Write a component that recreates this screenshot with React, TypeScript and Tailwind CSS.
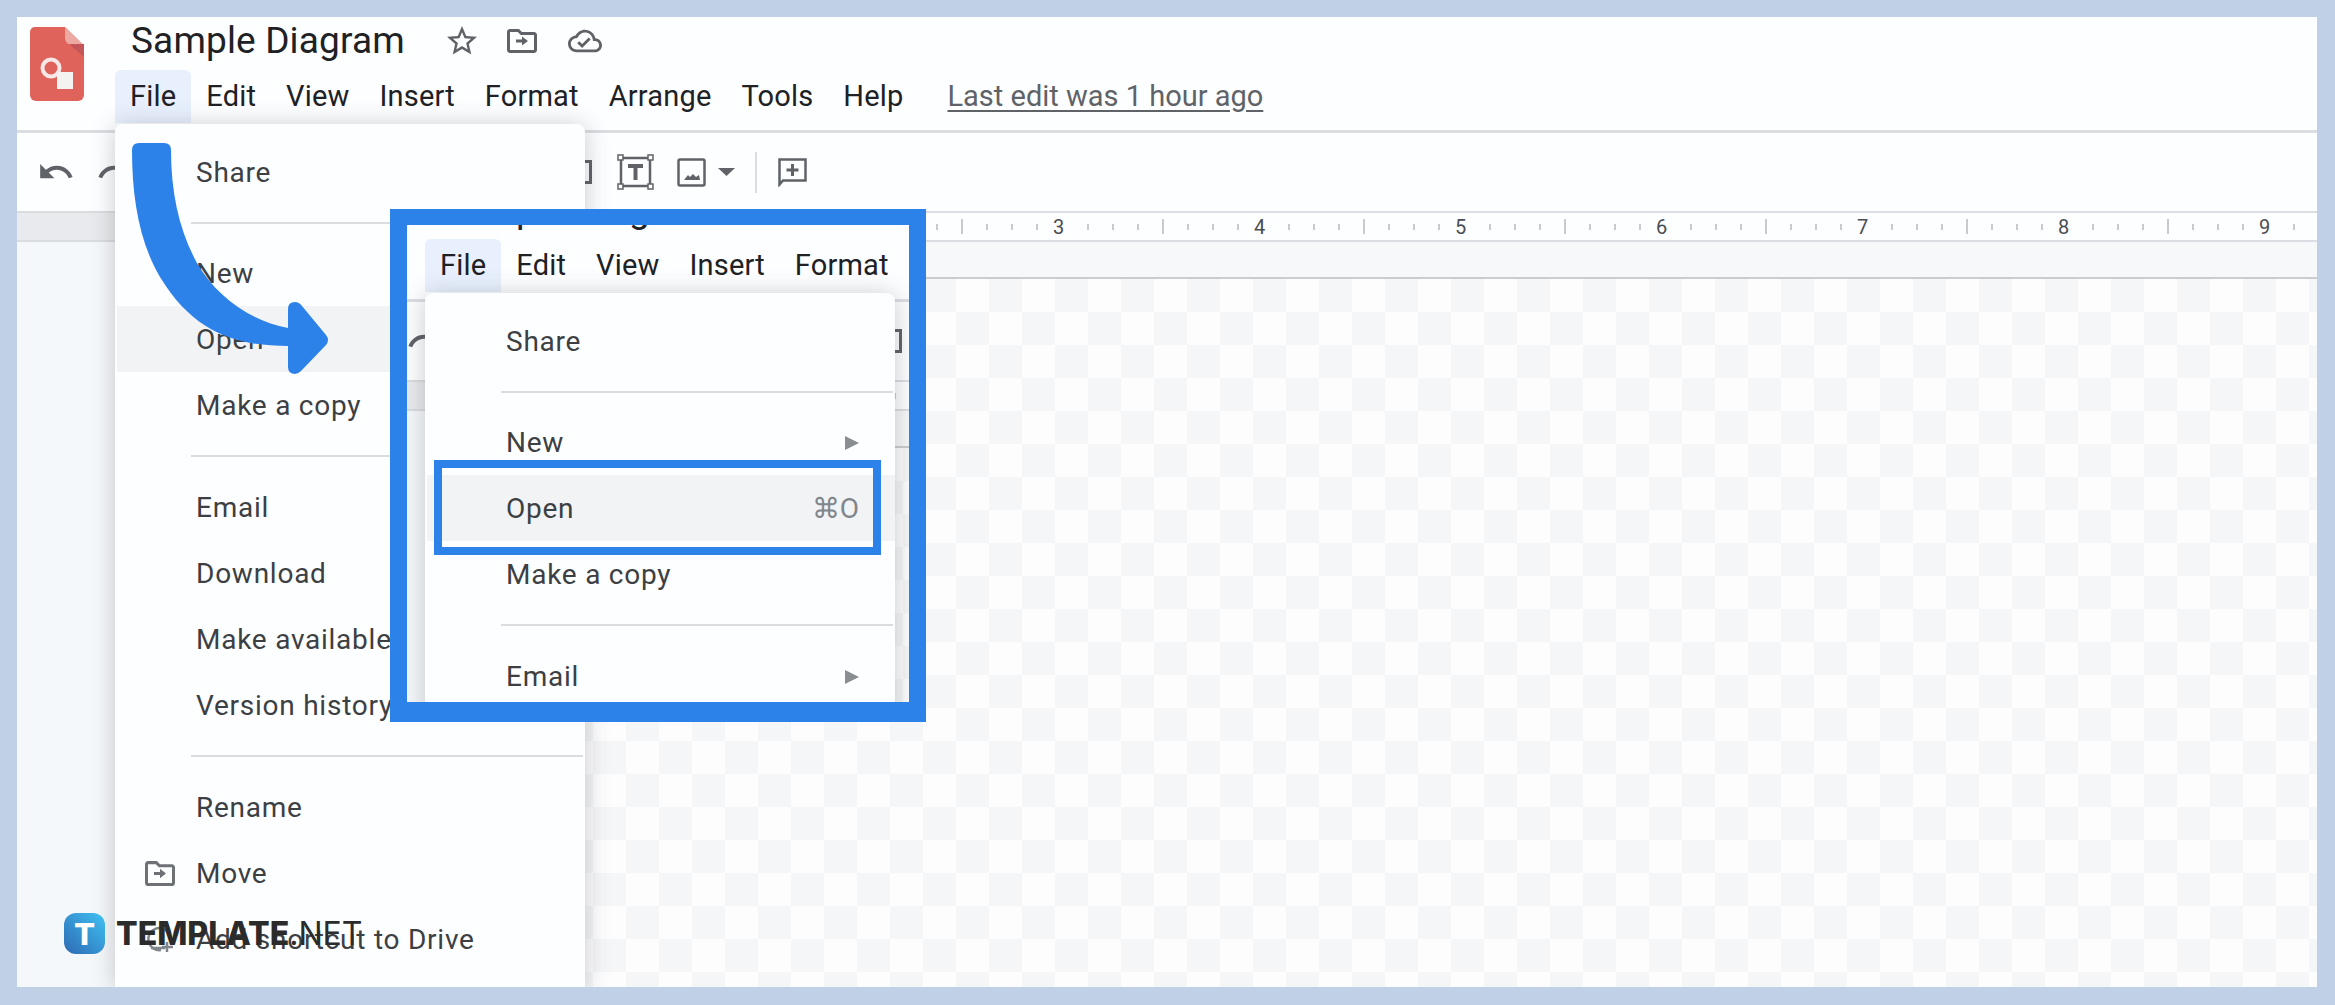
import React from 'react';

const menuBar = ['File', 'Edit', 'View', 'Insert', 'Format', 'Arrange', 'Tools', 'Help'];

const rulerGroups = [1, 2, 3, 4, 5, 6, 7, 8, 9];

const FolderMove = ({ className }: { className: string }) => (
  <svg viewBox="2 4 20 16" className={className} fill="#5f6368" preserveAspectRatio="none">
    <path d="M20 6h-8l-2-2H4c-1.1 0-2 .9-2 2v12c0 1.1.9 2 2 2h16c1.1 0 2-.9 2-2V8c0-1.1-.9-2-2-2zm0 12H4V6h5.17l2 2H20v10zm-8-5H8v-2h4V9l4 3-4 3v-2z" />
  </svg>
);

const DocIcon = () => (
  <svg viewBox="0 0 54 74" className="w-[54px] h-[74px]">
    <path d="M5 0H35L54 19V68a6 6 0 0 1-6 6H6a6 6 0 0 1-6-6V5a5 5 0 0 1 5-5z" fill="#df635b" />
    <path d="M35 0L54 18H42a7 7 0 0 1-7-7z" fill="#eea8a2" />
    <path d="M39 17H54V30z" fill="#c4565a" />
    <circle cx="21" cy="41" r="8.5" fill="none" stroke="#f6e8e7" strokeWidth="4" />
    <rect x="27" y="45" width="16" height="17" fill="#f5f2f2" />
  </svg>
);

const TextBoxIcon = () => (
  <svg viewBox="0 0 37 36" className="ml-[25px] w-[37px] h-[36px]">
    <rect x="4" y="4" width="29" height="28" fill="none" stroke="#5f6368" strokeWidth="2.5" />
    <path d="M11 10H26V14H20.5V26H16.5V14H11z" fill="#5f6368" />
    {[[3.5, 3.5], [33.5, 3.5], [3.5, 32.5], [33.5, 32.5]].map(([x, y]) => (
      <rect key={`${x}-${y}`} x={x - 2.5} y={y - 2.5} width="5" height="5" fill="#fdfeff" stroke="#5f6368" strokeWidth="1.5" />
    ))}
  </svg>
);

const Toolbar = () => (
  <div className="flex h-[78px] items-center">
    <svg viewBox="0 0 24 24" className="ml-[20px] w-[38px] h-[38px]" fill="#5f6368">
      <path d="M12.5 8c-2.65 0-5.05.99-6.9 2.6L2 7v9h9l-3.62-3.62c1.39-1.16 3.16-1.88 5.12-1.88 3.54 0 6.55 2.31 7.6 5.5l2.37-.78C21.08 11.03 17.15 8 12.5 8z" />
    </svg>
    <svg viewBox="0 0 24 24" className="ml-[21px] w-[38px] h-[38px]" fill="#5f6368">
      <path d="M18.4 10.6C16.55 8.99 14.15 8 11.5 8c-4.65 0-8.58 3.03-9.96 7.22L3.9 16c1.05-3.19 4.05-5.5 7.6-5.5 1.95 0 3.73.72 5.12 1.88L13 16h9V7l-3.6 3.6z" />
    </svg>
    <svg viewBox="0 0 8 24" className="ml-[450px] w-[8px] h-[24px]">
      <path d="M0 1.5H6.5V22.5H0" fill="none" stroke="#5f6368" strokeWidth="3" />
    </svg>
    <TextBoxIcon />
    <svg viewBox="0 0 29 29" className="ml-[23px] w-[29px] h-[29px]">
      <rect x="1.5" y="1.5" width="26" height="26" rx="1.5" fill="none" stroke="#5f6368" strokeWidth="2.5" />
      <path d="M7 22L11 17L13 19L16 16L19 19L22 17L23 22z" fill="#5f6368" />
    </svg>
    <svg viewBox="0 0 17 8" className="ml-[12px] w-[17px] h-[8px]">
      <path d="M0 0H17L8.5 8z" fill="#5f6368" />
    </svg>
    <div className="ml-[20px] w-[2px] h-[41px] bg-[#dadce0]" />
    <svg viewBox="0 0 29 29" className="ml-[21px] w-[29px] h-[29px]">
      <path d="M1.5 1.5H27.5V22.5H5L1.5 26.5z" fill="none" stroke="#5f6368" strokeWidth="2.5" />
      <path d="M13 6H16V10.5H20.5V13.5H16V18H13V13.5H8.5V10.5H13z" fill="#5f6368" />
    </svg>
  </div>
);

const Ruler = () => (
  <div className="flex h-[27px] overflow-hidden bg-[#fdfeff] pl-[32px]">
    {rulerGroups.map((n) => (
      <div key={n} className="grid w-[201px] shrink-0 grid-cols-8 items-center">
        <div className="w-[2px] h-[15px] bg-[#c8cacd]" />
        <div className="w-[2px] h-[6px] bg-[#c8cacd]" />
        <div className="w-[2px] h-[6px] bg-[#c8cacd]" />
        <div className="w-[2px] h-[6px] bg-[#c8cacd]" />
        <div className="flex w-0 justify-center -ml-[3px] text-[20px] leading-none text-[#4a4d52]">{n}</div>
        <div className="w-[2px] h-[6px] bg-[#c8cacd]" />
        <div className="w-[2px] h-[6px] bg-[#c8cacd]" />
        <div className="w-[2px] h-[6px] bg-[#c8cacd]" />
      </div>
    ))}
  </div>
);

const Arrow = () => <div className="ml-auto mr-[36px] w-0 h-0 border-y-[7px] border-y-transparent border-l-[14px] border-l-[#8a8d91]" />;

const Item = ({ label, children, active }: { label: string; children?: React.ReactNode; active?: boolean }) => (
  <div className={`flex h-[66px] items-center whitespace-nowrap pl-[79px] pt-[1px] text-[28px] tracking-[0.75px] text-[#3c4043] ${active ? 'bg-[#f1f3f4]' : ''}`}>
    <span>{label}</span>
    {children}
  </div>
);

const Divider = ({ first }: { first?: boolean }) => (
  <div className={`mt-[17px] ml-[74px] mr-[2px] h-[2px] bg-[#dadce0] ${first ? 'mb-[16px]' : 'mb-[17px]'}`} />
);

const FileMenu = () => (
  <div className="absolute left-[98px] top-[107px] h-[863px] w-[470px] rounded-t-[8px] bg-[#fdfeff] pt-[15px] pl-[2px] shadow-[0_2px_24px_rgba(60,64,67,0.28)]">
    <Item label="Share" />
    <Divider first />
    <Item label="New">
      <Arrow />
    </Item>
    <Item label="Open" active>
      <span className="ml-auto mr-[36px] text-[28px] tracking-normal text-[#80868b]">⌘O</span>
    </Item>
    <Item label="Make a copy" />
    <Divider />
    <Item label="Email">
      <Arrow />
    </Item>
    <Item label="Download" />
    <Item label="Make available offline" />
    <Item label="Version history" />
    <Divider />
    <Item label="Rename" />
    <div className="relative">
      <Item label="Move" />
      <FolderMove className="absolute left-[28px] top-[21px] w-[30px] h-[25px] opacity-90" />
    </div>
    <div className="relative">
      <Item label="Add shortcut to Drive" />
      <svg viewBox="0 0 30 30" className="absolute left-[28px] top-[18px] w-[30px] h-[30px]" fill="none" stroke="#80868b" strokeWidth="2.5">
        <path d="M24 10A11 11 0 1 0 16 26" />
        <path d="M6 24H20M22 18V28M17 23H28" />
      </svg>
    </div>
  </div>
);

const Screen = () => (
  <div className="relative flex h-[970px] w-[2300px] flex-col overflow-hidden bg-[#fdfeff] font-[Roboto,sans-serif]">
    <div className="flex h-[113px] shrink-0 pl-[13px] pt-[10px]">
      <DocIcon />
      <div className="-mt-[10px] ml-[31px] flex flex-col">
        <div className="flex h-[53px] items-center pb-[6px] pl-[16px]">
          <span className="text-[37px] leading-none tracking-[0.15px] text-[#202124]">Sample Diagram</span>
          <svg viewBox="0 0 24 24" className="ml-[39px] w-[36px] h-[36px]" fill="#5f6368">
            <path d="M22 9.24l-7.19-.62L12 2 9.19 8.63 2 9.24l5.46 4.73L5.82 21 12 17.27 18.18 21l-1.63-7.03L22 9.24zM12 15.4l-3.76 2.27 1-4.28-3.32-2.88 4.38-.38L12 6.1l1.71 4.04 4.38.38-3.32 2.88 1 4.28L12 15.4z" />
          </svg>
          <FolderMove className="ml-[27px] w-[30px] h-[24px]" />
          <svg viewBox="0 0 24 24" className="ml-[31px] w-[34px] h-[34px]" fill="#5f6368">
            <path d="M19.35 10.04C18.67 6.59 15.64 4 12 4 9.11 4 6.6 5.64 5.35 8.04 2.34 8.36 0 10.91 0 14c0 3.31 2.69 6 6 6h13c2.76 0 5-2.24 5-5 0-2.64-2.05-4.78-4.65-4.96zM19 18H6c-2.21 0-4-1.79-4-4 0-2.05 1.53-3.76 3.56-3.97l1.07-.11.5-.95C8.08 7.14 9.94 6 12 6c2.62 0 4.88 1.86 5.39 4.43l.3 1.5 1.53.11c1.56.1 2.78 1.41 2.78 2.96 0 1.65-1.35 3-3 3zm-9-3.82l-2.09-2.09L6.5 13.5 10 17l6.01-6.01-1.41-1.41z" />
          </svg>
        </div>
        <div className="flex h-[53px] items-center text-[29px] text-[#202124]">
          {menuBar.map((m, i) => (
            <div key={m} className={`flex h-full items-center rounded-t-[6px] px-[15px] tracking-[0.18px] ${i === 0 ? 'bg-[#e8f0fe]' : ''}`}>
              {m}
            </div>
          ))}
          <span className="ml-[29px] whitespace-nowrap text-[#5f6368] underline underline-offset-[4px]">Last edit was 1 hour ago</span>
        </div>
      </div>
    </div>
    <div className="h-[3px] shrink-0 bg-[#dcdde3]" />
    <Toolbar />
    <div className="flex min-h-0 flex-1">
      <div className="flex w-[510px] shrink-0 flex-col bg-[#f5f8fb]">
        <div className="h-[31px] border-y-2 border-y-[#dadce0] bg-[#e8eaed]" />
      </div>
      <div className="flex min-w-0 flex-1 flex-col">
        <div className="h-[2px] bg-[#dcdde3]" />
        <Ruler />
        <div className="h-[2px] bg-[#dcdde3]" />
        <div className="h-[35px] bg-[#f6f8f9]" />
        <div className="h-[2px] bg-[#cbccce]" />
        <div className="flex-1 bg-[repeating-conic-gradient(#fdfdfe_0_25%,#f5f6f7_0_50%)] bg-[length:66px_66px]" />
      </div>
    </div>
    <FileMenu />
  </div>
);

export default function App() {
  return (
    <div className="relative h-[1005px] w-[2335px] overflow-hidden bg-[#c0d0e6] pl-[17px] pt-[17px]">
      <Screen />

      {/* blown up copy of the same screen */}
      <div className="absolute left-[390px] top-[209px] h-[513px] w-[536px] overflow-hidden border-x-[17px] border-t-[16px] border-b-[20px] border-[#2d82ea]">
        <div className="absolute left-[-80px] top-[-39px]">
          <Screen />
        </div>
      </div>
      <div className="absolute left-[434px] top-[460px] h-[95px] w-[447px] border-[8px] border-[#2d82ea]" />

      <svg viewBox="0 0 2335 1005" className="pointer-events-none absolute left-0 top-0 w-[2335px] h-[1005px]">
        <path
          d="M139 143H164Q171 143 171 150C171 195 180 232 197 263C216 296 250 321 288 328V309Q288 302 295 302Q299 302 302 306L326 335Q330 340 326 345L301 371Q298 374 295 374Q288 374 288 367V346C240 346 195 335 160 277C140 243 132 200 132 150Q132 143 139 143Z"
          fill="#2d82ea"
        />
      </svg>

      <div className="absolute left-[64px] top-[913px] flex items-center">
        <div className="flex h-[41px] w-[41px] items-center justify-center rounded-[12px] bg-gradient-to-tr from-[#2e6ab3] to-[#3fc2f3] font-[Roboto,sans-serif] text-[32px] font-black leading-none text-white">
          T
        </div>
        <div className="ml-[11px] whitespace-nowrap font-[Inter,sans-serif] text-[32px] leading-none text-[#2b2b2b]">
          <span className="font-extrabold">TEMPLATE</span>
          <span className="font-normal">.NET</span>
        </div>
      </div>
    </div>
  );
}
